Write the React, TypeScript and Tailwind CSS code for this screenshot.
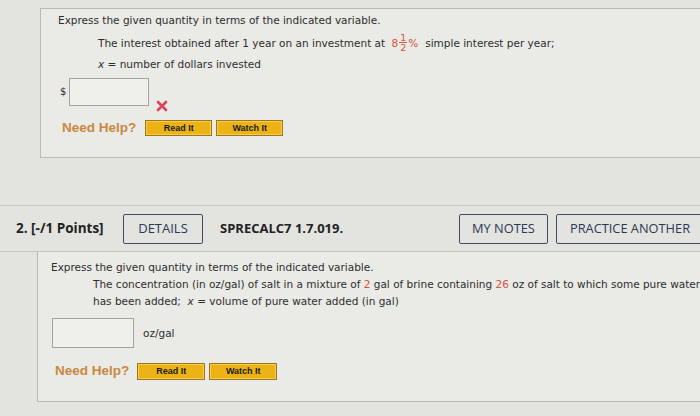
export default function App() {
  const body = "[font-family:'DejaVu_Sans',Verdana,sans-serif] text-[10.5px] text-[#2e2e2e]";
  const red = "text-[#d2553f]";

  const HelpRow = ({ gap, btn }: { gap: string; btn: string }) => (
    <div className={`flex items-center ${gap}`}>
      <span className="[font-family:'Liberation_Sans',Arial,sans-serif] text-[13.5px] font-bold text-[#c9883f]">Need Help?</span>
      <div className="flex items-center gap-[4px]">
        <button className={`${btn} border border-[#9d7624] bg-[#ebb316] shadow-[inset_0_0_0_1px_#f6cc4a] [font-family:'Liberation_Sans',Arial,sans-serif] text-[9px] font-bold text-[#1a1a1a] leading-none`}>
          Read It
        </button>
        <button className={`${btn} border border-[#9d7624] bg-[#ebb316] shadow-[inset_0_0_0_1px_#f6cc4a] [font-family:'Liberation_Sans',Arial,sans-serif] text-[9px] font-bold text-[#1a1a1a] leading-none`}>
          Watch It
        </button>
      </div>
    </div>
  );

  return (
    <div className={`w-[700px] h-[416px] overflow-hidden bg-[#e3e3e0] ${body}`}>
      {/* question 1 (tail end) */}
      <div className="pt-[8px]">
        <div className="ml-[40px] h-[150px] border-l border-t border-b border-[#b9b9b6] bg-[#eaeae7] pl-[17px] pt-[3px]">
          <p className="leading-[16px]">Express the given quantity in terms of the indicated variable.</p>
          <div className="pl-[40px] pt-[5px]">
            <p className="leading-[16px] flex items-center">
              <span>The interest obtained after 1 year on an investment at&nbsp;</span>
              <span className={`${red} inline-flex items-center ml-[3px]`}>
                8
                <span className="inline-flex flex-col items-center leading-[9px] text-[9.5px] mx-[1px]">
                  <span className="border-b border-[#d2553f] px-[1px]">1</span>
                  <span>2</span>
                </span>
                %
              </span>
              <span className="ml-[7px]">simple interest per year;</span>
            </p>
            <p className="leading-[16px] pt-[4px]">
              <i>x</i> = number of dollars invested
            </p>
          </div>
          <div className="flex items-end pt-[6px] -ml-[15px] pl-[17px]">
            <span className="mb-[7px] mr-[3px] text-[10px]">$</span>
            <div className="w-[80px] h-[28px] border border-[#a3a3a0] bg-[#efefec]" />
            <svg width="12" height="12" viewBox="0 0 12 12" className="ml-[7px] -mb-[6px]">
              <path d="M2 2 L10 10 M10 2 L2 10" stroke="#d9465a" strokeWidth="2.6" strokeLinecap="round" />
            </svg>
          </div>
          <div className="pt-[12px] -ml-[14px] pl-[18px]">
            <HelpRow gap="gap-[9px]" btn="w-[67px] h-[16px]" />
          </div>
        </div>
      </div>

      {/* question 2 header */}
      <div className="mt-[47px] border-t border-[#c9c9c6] h-[46px] flex items-center pl-[16px] [font-family:'Open_Sans',sans-serif] text-[#222]">
        <span className="w-[107px] text-[13.5px] font-bold">2. [-/1 Points]</span>
        <div className="w-[80px] h-[30px] border border-[#414d66] rounded-[2px] flex items-center justify-center text-[13px] text-[#2b3856]">
          DETAILS
        </div>
        <span className="ml-[17px] text-[13px] font-bold">SPRECALC7 1.7.019.</span>
        <div className="ml-auto w-[89px] h-[30px] border border-[#414d66] rounded-[2px] flex items-center justify-center text-[12.8px] text-[#2b3856]">
          MY NOTES
        </div>
        <div className="ml-[8px] -mr-[10px] w-[154px] h-[30px] border border-[#414d66] rounded-[2px] flex items-center pl-[13px] text-[12.8px] text-[#2b3856]">
          PRACTICE ANOTHER
        </div>
      </div>

      {/* question 2 body */}
      <div className="border-t border-[#c4c4c1]">
        <div className="ml-[37px] h-[150px] border-l border-b border-[#b9b9b6] bg-[#eaeae7] pl-[13px] pt-[7px]">
          <p className="leading-[16px]">Express the given quantity in terms of the indicated variable.</p>
          <div className="pl-[42px] pt-[1px] leading-[17px] whitespace-nowrap">
            <p>
              The concentration (in oz/gal) of salt in a mixture of <span className={red}>2</span> gal of brine containing{" "}
              <span className={red}>26</span> oz of salt to which some pure water
            </p>
            <p>
              has been added;&nbsp; <i>x</i> = volume of pure water added (in gal)
            </p>
          </div>
          <div className="flex items-center pt-[8px] pl-[1px]">
            <div className="w-[82px] h-[30px] border border-[#a3a3a0] bg-[#efefec]" />
            <span className="ml-[9px] mt-[2px]">oz/gal</span>
          </div>
          <div className="pt-[13px] pl-[4px]">
            <HelpRow gap="gap-[8px]" btn="w-[68px] h-[17px]" />
          </div>
        </div>
      </div>
    </div>
  );
}
